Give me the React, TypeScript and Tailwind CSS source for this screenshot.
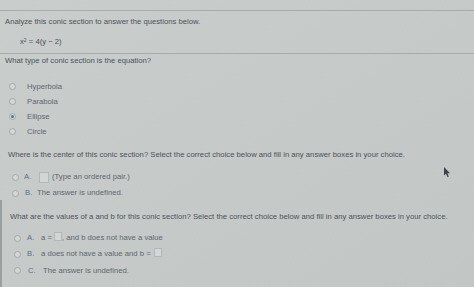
import React from "react";

const font = { fontFamily: '"Liberation Sans", Arial, sans-serif' };

function Radio({ checked = false }: { checked?: boolean }) {
  return (
    <span className="flex h-[7px] w-[7px] items-center justify-center rounded-full border border-[#a3a9aa] bg-[#d3d7d6]">
      {checked && <span className="h-[3px] w-[3px] rounded-full bg-[#4f6f9a]" />}
    </span>
  );
}

function Box({ w = "w-[10px]", h = "h-[11px]" }: { w?: string; h?: string }) {
  return <span className={`inline-block ${w} ${h} border border-[#b2b7b7] bg-[#d2d6d5]`} />;
}

export default function App() {
  const shapes = ["Hyperbola", "Parabola", "Ellipse", "Circle"];

  return (
    <div
      className="relative h-[287px] w-[474px] overflow-hidden bg-gradient-to-br from-[#c9cdcc] to-[#c2c7c6] text-[7.7px] text-[#4c5257]"
      style={font}
    >
      <div className="h-[10px]" />
      <div className="border-t border-[#a6acac] px-[5px] pb-[6px] pt-[6px]">
        <div className="flex h-[10px] items-center">Analyze this conic section to answer the questions below.</div>
        <div className="mt-[10px] flex h-[10px] items-center pl-[15px]">
          <span>
            x<sup className="text-[5px]">2</sup> = 4(y − 2)
          </span>
        </div>
      </div>
      <div className="border-t border-[#a6acac] px-[5px] pt-[2px]">
        <div className="flex h-[10px] items-center">What type of conic section is the equation?</div>
        <div className="mt-[13px] flex flex-col pl-[4px] text-[#60666b]">
          {shapes.map((s) => (
            <div key={s} className="flex h-[15px] items-center gap-[11px]">
              <Radio checked={s === "Ellipse"} />
              <span>{s}</span>
            </div>
          ))}
        </div>

        <div className="mt-[11px] flex h-[10px] items-center pl-[3px]">
          Where is the center of this conic section? Select the correct choice below and fill in any answer boxes in your choice.
        </div>
        <div className="mt-[9px] flex flex-col pl-[7px] text-[#60666b]">
          <div className="flex h-[16px] items-center">
            <Radio />
            <span className="ml-[5px] w-[15px] text-[#5d6e86]">A.</span>
            <Box />
            <span className="ml-[3px]">(Type an ordered pair.)</span>
          </div>
          <div className="flex h-[16px] items-center">
            <Radio />
            <span className="ml-[6px] w-[12px] text-[#5d6e86]">B.</span>
            <span>The answer is undefined.</span>
          </div>
        </div>

        <div className="mt-[11px] flex h-[10px] items-center pl-[5px]">
          What are the values of a and b for this conic section? Select the correct choice below and fill in any answer boxes in your choice.
        </div>
        <div className="mt-[8px] flex flex-col pl-[9px] text-[#60666b]">
          <div className="flex h-[16px] items-center">
            <Radio />
            <span className="ml-[6px] w-[14px] text-[#5d6e86]">A.</span>
            <span>a =</span>
            <span className="ml-[2px]">
              <Box w="w-[8px]" h="h-[9px]" />
            </span>
            <span>, and b does not have a value</span>
          </div>
          <div className="flex h-[16px] items-center">
            <Radio />
            <span className="ml-[6px] w-[14px] text-[#5d6e86]">B.</span>
            <span>a does not have a value and b =</span>
            <span className="ml-[3px]">
              <Box w="w-[8px]" h="h-[9px]" />
            </span>
          </div>
          <div className="flex h-[17px] items-center">
            <Radio />
            <span className="ml-[7px] w-[15px] text-[#5d6e86]">C.</span>
            <span>The answer is undefined.</span>
          </div>
        </div>
      </div>

      <div className="absolute bottom-0 left-0 top-[200px] w-[2px] bg-[#9a9fa0]" />

      <svg className="absolute left-[443px] top-[167px]" width="8" height="11" viewBox="0 0 8 11">
        <path d="M1 0 L1 8.5 L3 6.8 L4.6 10.2 L5.8 9.6 L4.3 6.3 L7 6.2 Z" fill="#3d4246" />
      </svg>
    </div>
  );
}
